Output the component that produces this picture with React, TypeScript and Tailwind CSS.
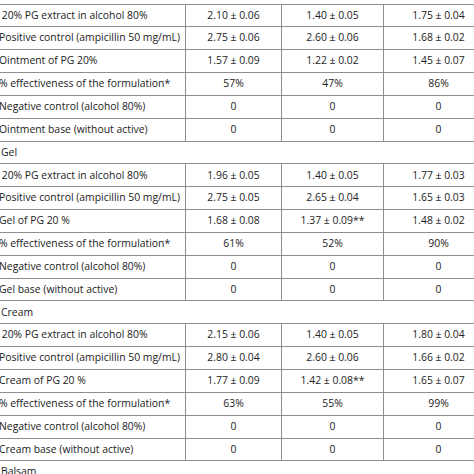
import React from "react";

type Row = [string, string, string, string];

const groups: { label?: string; rows: Row[] }[] = [
  {
    rows: [
      [" 20% PG extract in alcohol 80%", "2.10 ± 0.06", "1.40 ± 0.05", "1.75 ± 0.04"],
      ["Positive control (ampicillin 50 mg/mL)", "2.75 ± 0.06", "2.60 ± 0.06", "1.68 ± 0.02"],
      ["Ointment of PG 20%", "1.57 ± 0.09", "1.22 ± 0.02", "1.45 ± 0.07"],
      ["% effectiveness of the formulation*", "57%", "47%", "86%"],
      ["Negative control (alcohol 80%)", "0", "0", "0"],
      ["Ointment base (without active)", "0", "0", "0"],
    ],
  },
  {
    label: "Gel",
    rows: [
      [" 20% PG extract in alcohol 80%", "1.96 ± 0.05", "1.40 ± 0.05", "1.77 ± 0.03"],
      ["Positive control (ampicillin 50 mg/mL)", "2.75 ± 0.05", "2.65 ± 0.04", "1.65 ± 0.03"],
      ["Gel of PG 20 %", "1.68 ± 0.08", "1.37 ± 0.09**", "1.48 ± 0.02"],
      ["% effectiveness of the formulation*", "61%", "52%", "90%"],
      ["Negative control (alcohol 80%)", "0", "0", "0"],
      ["Gel base (without active)", "0", "0", "0"],
    ],
  },
  {
    label: "Cream",
    rows: [
      [" 20% PG extract in alcohol 80%", "2.15 ± 0.06", "1.40 ± 0.05", "1.80 ± 0.04"],
      ["Positive control (ampicillin 50 mg/mL)", "2.80 ± 0.04", "2.60 ± 0.06", "1.66 ± 0.02"],
      ["Cream of PG 20 %", "1.77 ± 0.09", "1.42 ± 0.08**", "1.65 ± 0.07"],
      ["% effectiveness of the formulation*", "63%", "55%", "99%"],
      ["Negative control (alcohol 80%)", "0", "0", "0"],
      ["Cream base (without active)", "0", "0", "0"],
    ],
  },
  { label: "Balsam", rows: [] },
];

function DataRow({ row }: { row: Row }) {
  return (
    <div className="grid h-[22.85px] grid-cols-[186px_96px_102px_110px] border-t border-[#8f8f8f]">
      <div className="flex items-center whitespace-pre">{row[0]}</div>
      {row.slice(1).map((cell, i) => (
        <div key={i} className="flex items-center justify-center border-l border-[#8f8f8f]">
          {cell}
        </div>
      ))}
    </div>
  );
}

export default function App() {
  return (
    <div className="h-[474px] w-[474px] overflow-hidden bg-white">
      <div
        className="-ml-[1px] w-[494px] pt-[3.5px] text-[10.4px] text-[#222]"
        style={{ fontFamily: '"Open Sans", "Noto Sans", sans-serif' }}
      >
        {groups.map((g, gi) => (
          <div key={gi}>
            {g.label && (
              <div className="flex h-[22.85px] items-center border-t border-[#8f8f8f] pl-[2px]">
                {g.label}
              </div>
            )}
            {g.rows.map((r, ri) => (
              <DataRow key={ri} row={r} />
            ))}
          </div>
        ))}
      </div>
    </div>
  );
}
